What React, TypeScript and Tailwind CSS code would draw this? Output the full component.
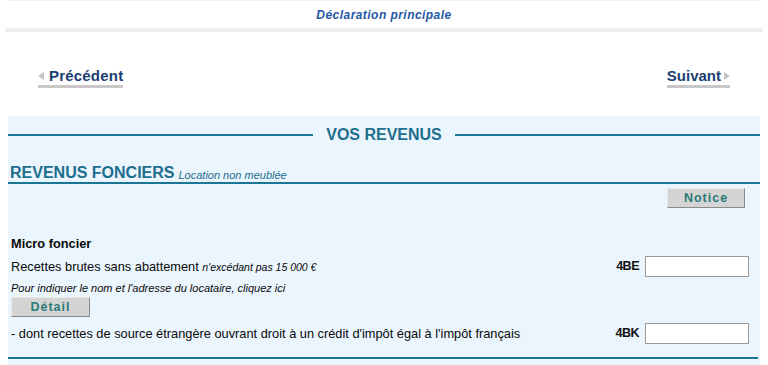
import React from 'react';

const font = { fontFamily: '"Liberation Sans", Arial, sans-serif' };

const GreyButton: React.FC<{ label: string; className?: string }> = ({ label, className = '' }) => (
  <button
    className={`h-[20px] bg-[#d4d4d4] border border-t-[#e8e8e8] border-l-[#e8e8e8] border-r-[#8a8a8a] border-b-[#8a8a8a] text-[12.5px] font-bold text-[#2a7b78] tracking-[1px] leading-none ${className}`}
  >
    {label}
  </button>
);

const CodeInput: React.FC<{ code: string }> = ({ code }) => (
  <div className="flex items-center gap-[6px]">
    <span className="text-[12.5px] font-bold text-[#111] tracking-[-0.5px]">{code}</span>
    <input className="w-[104px] h-[21px] bg-white border border-[#9a9a9a] outline-none" />
  </div>
);

export default function App() {
  return (
    <div className="w-[768px] h-[365px] bg-white overflow-hidden px-[8px]" style={font}>
      {/* header */}
      <div className="border-t border-[#f2f2f2] h-[28px] flex items-center justify-center">
        <span className="text-[12px] font-bold italic text-[#2458a4] tracking-[0.45px]">Déclaration principale</span>
      </div>
      <div className="h-[4px] bg-[#f0f0f0] -mx-[3px]" />

      {/* navigation */}
      <div className="h-[84px] flex items-center justify-between px-[30px] pt-[8px]">
        <a className="flex items-center gap-[5px] border-b-[3px] border-[#c8c8c8] pb-[1px] cursor-pointer">
          <span className="w-0 h-0 border-y-[4px] border-y-transparent border-r-[6px] border-r-[#c4c4c4]" />
          <span className="text-[15px] font-bold text-[#1b4173] leading-[16px] tracking-[0.2px]">Précédent</span>
        </a>
        <a className="flex items-center gap-[3px] border-b-[3px] border-[#c8c8c8] pb-[1px] cursor-pointer">
          <span className="text-[15px] font-bold text-[#1b4173] leading-[16px]">Suivant</span>
          <span className="w-0 h-0 border-y-[4px] border-y-transparent border-l-[6px] border-l-[#c4c4c4]" />
        </a>
      </div>

      {/* panel */}
      <div className="bg-[#eaf5fd] pt-[10px]">
        <div className="flex items-center gap-[13px] h-[18px]">
          <div className="flex-1 h-[2px] bg-[#1b7595]" />
          <span className="text-[16px] font-bold text-[#1e6e8e]">VOS REVENUS</span>
          <div className="flex-1 h-[2px] bg-[#1b7595]" />
        </div>

        <div className="mt-[20px] border-b-[2px] border-[#1b7595] pl-[2px] flex items-end gap-[4px] h-[20px]">
          <span className="text-[16px] font-bold text-[#1e6e8e] leading-[18px]">REVENUS FONCIERS</span>
          <span className="text-[11px] italic text-[#1e6e8e] leading-[14px]">Location non meublée</span>
        </div>

        <div className="flex justify-end pr-[15px] pt-[4px]">
          <GreyButton label="Notice" className="w-[78px]" />
        </div>

        <div className="pl-[3px] pr-[11px] pt-[26px]">
          <div className="text-[12.8px] font-bold text-[#0a0a0a]">Micro foncier</div>
          <div className="flex items-center justify-between mt-[3px]">
            <div className="text-[12.8px] text-[#0a0a0a]">
              Recettes brutes sans abattement{' '}
              <span className="text-[10.5px] italic">n'excédant pas 15 000 €</span>
            </div>
            <CodeInput code="4BE" />
          </div>
          <div className="text-[11px] italic text-[#0a0a0a] mt-[5px] leading-[12px]">
            Pour indiquer le nom et l'adresse du locataire, cliquez ici
          </div>
          <GreyButton label="Détail" className="w-[79px] mt-[3px] tracking-[0.5px]" />
          <div className="flex items-center justify-between mt-[5px]">
            <div className="text-[12.8px] text-[#0a0a0a]">
              - dont recettes de source étrangère ouvrant droit à un crédit d'impôt égal à l'impôt français
            </div>
            <CodeInput code="4BK" />
          </div>
        </div>
        <div className="mt-[13px] h-[2px] bg-[#1b7595] mr-[2px]" />
        <div className="h-[10px]" />
      </div>
    </div>
  );
}
